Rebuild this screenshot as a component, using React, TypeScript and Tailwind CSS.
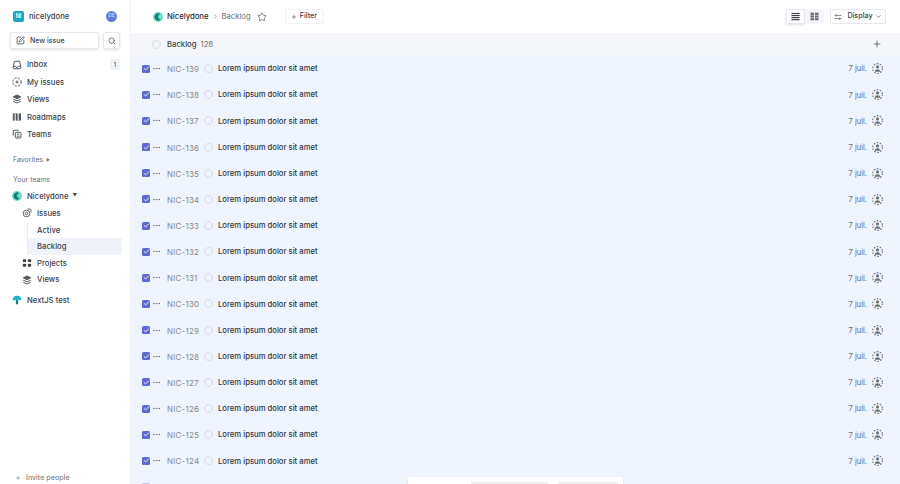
import type { ReactNode } from 'react';
import { Check, ChevronDown, ChevronRight, Ellipsis, Plus, Search, SquarePen, Star } from 'lucide-react';

const ISSUES = [139, 138, 137, 136, 135, 134, 133, 132, 131, 130, 129, 128, 127, 126, 125, 124];

const Logo = () => (
  <svg viewBox="0 0 12 12" className="w-[10px] h-[10px]">
    <circle cx="6" cy="6" r="6" fill="#74dccb" />
    <path d="M9 2.8A4.2 4.2 0 1 0 9.2 8.9 3.4 3.4 0 0 1 6 6.4 3.4 3.4 0 0 1 9 2.8Z" fill="#0f8073" />
  </svg>
);

const DashedCircle = ({ className }: { className: string }) => (
  <svg viewBox="0 0 14 14" className={className} fill="none">
    <circle cx="7" cy="7" r="6" stroke="#c6cad3" strokeWidth="1.2" strokeDasharray="2.6 0.5" />
  </svg>
);

const Assignee = () => (
  <svg viewBox="0 0 14 14" className="w-[11px] h-[11px]" fill="none">
    <circle cx="7" cy="7" r="6.2" stroke="#6b6f76" strokeWidth="1.4" strokeDasharray="2 1.9" />
    <circle cx="7" cy="5" r="2" fill="#6b6f76" />
    <path d="M3.4 11c.3-2.2 1.8-3.2 3.6-3.2s3.3 1 3.6 3.2Z" fill="#6b6f76" />
  </svg>
);

const InboxIcon = () => (
  <svg viewBox="0 0 12 12" className="w-[10px] h-[10px]" fill="none" stroke="#565a63" strokeWidth="1.2">
    <path d="M3 1.5h6l1.5 6v2.2a.8.8 0 0 1-.8.8H2.3a.8.8 0 0 1-.8-.8V7.5Z" />
    <path d="M1.5 7.5h2.6c.3 1 1 1.4 1.9 1.4s1.6-.4 1.9-1.4h2.6" />
  </svg>
);

const MyIssuesIcon = () => (
  <svg viewBox="0 0 12 12" className="w-[10px] h-[10px]" fill="none" stroke="#565a63" strokeWidth="1.2">
    <circle cx="6" cy="6" r="5" strokeDasharray="2.4 1.6" />
    <path d="M6 4.2v3.6M4.2 6h3.6" />
  </svg>
);

const ViewsIcon = () => (
  <svg viewBox="0 0 12 12" className="w-[10px] h-[10px]" fill="none" stroke="#565a63" strokeWidth="1.2">
    <path d="M6 1.2 10.5 3.4 6 5.6 1.5 3.4Z" fill="#565a63" />
    <path d="M1.5 6.2 6 8.2l4.5-2M1.5 8.8 6 10.8l4.5-2" />
  </svg>
);

const RoadmapsIcon = () => (
  <svg viewBox="0 0 12 12" className="w-[10px] h-[10px]" fill="#565a63">
    <path d="M1 2.2 3.2 1.2v8.6L1 10.8ZM4.4 1.2l2.4 1v8.6l-2.4-1ZM8 2.2l2.8-1v8.6L8 10.8Z" />
  </svg>
);

const TeamsIcon = () => (
  <svg viewBox="0 0 12 12" className="w-[10px] h-[10px]" fill="none" stroke="#565a63" strokeWidth="1.2">
    <path d="M8 1.5H2.3a.8.8 0 0 0-.8.8V8" />
    <rect x="4" y="4" width="6.8" height="6.8" rx="1" />
    <path d="M5.6 8.6h3.6M6.2 6.3h2.4" />
  </svg>
);

const IssuesIcon = () => (
  <svg viewBox="0 0 12 12" className="w-[10px] h-[10px]" fill="none" stroke="#565a63" strokeWidth="1.1">
    <circle cx="5.4" cy="6.6" r="4" />
    <circle cx="5.4" cy="6.6" r="1.6" />
    <path d="M6.5 1.2h3a1.3 1.3 0 0 1 1.3 1.3v3" />
  </svg>
);

const ProjectsIcon = () => (
  <svg viewBox="0 0 12 12" className="w-[10px] h-[10px]" fill="#3c4149">
    <rect x="1" y="1.5" width="4" height="3.4" rx="0.8" />
    <rect x="7" y="1.5" width="4" height="3.4" rx="0.8" />
    <rect x="1" y="7" width="4" height="3.4" rx="0.8" />
    <rect x="7" y="7" width="4" height="3.4" rx="0.8" />
  </svg>
);

const TreeIcon = () => (
  <svg viewBox="0 0 12 12" className="w-[10px] h-[10px]">
    <path d="M6 1C3 1 .8 2.8.6 5.4c1.6.9 3.4 1 5.4 1s3.8-.1 5.4-1C11.2 2.8 9 1 6 1Z" fill="#22b5c9" />
    <path d="M4.9 6h2.2l.3 5H4.6Z" fill="#17808f" />
  </svg>
);

const NavItem = ({ icon, label, badge }: { icon: ReactNode; label: string; badge?: string }) => (
  <div className="h-[17.4px] flex items-center pl-[12px] pr-[10px]">
    <span className="w-[10px] flex justify-center">{icon}</span>
    <span className="ml-[5px] pt-[1px] text-[7.7px] font-medium text-[#3c4149]">{label}</span>
    {badge && (
      <span className="ml-auto w-[10px] h-[11px] rounded-[2px] bg-[#edf2fa] text-[6px] text-[#3c4149] flex items-center justify-center">
        {badge}
      </span>
    )}
  </div>
);

const NavRow = ({ icon, label }: { icon: ReactNode; label: string }) => (
  <div className="h-[16.6px] pl-[22px] flex items-center">
    <span className="w-[10px] flex justify-center">{icon}</span>
    <span className="ml-[5px] pt-[1px] text-[7.7px] font-medium text-[#3c4149]">{label}</span>
  </div>
);

const IssueRow = ({ num }: { num: number }) => (
  <div className="h-[26.17px] shrink-0 flex items-center pl-[11px] pr-[17px]">
    <span className="w-[8px] h-[8px] rounded-[1.5px] bg-[#5e6ad2] flex items-center justify-center text-white">
      <Check size={7} strokeWidth={3} />
    </span>
    <Ellipsis size={9} className="ml-[2px] text-[#6b6f76]" />
    <span className="ml-[6px] w-[37px] pt-[1px] text-[8px] tracking-[0.2px] text-[#888888]">NIC-{num}</span>
    <DashedCircle className="w-[9px] h-[9px]" />
    <span className="ml-[5px] pt-[1px] text-[7.7px] font-medium text-[#33363d]">Lorem ipsum dolor sit amet</span>
    <span className="ml-auto pt-[1px] text-[7.5px] text-[#6b6f76]">7 juil.</span>
    <span className="ml-[5px]">
      <Assignee />
    </span>
  </div>
);

export default function App() {
  return (
    <div className="w-[900px] h-[484px] overflow-hidden flex bg-white font-['Inter',sans-serif]">
      <aside className="w-[131px] shrink-0 flex flex-col bg-white border-r border-[#eff1f4]">
        <div className="h-[32px] flex items-center px-[13px]">
          <span className="w-[11px] h-[11px] rounded-[2px] bg-[#1aa5c9] text-white text-[5.5px] font-semibold flex items-center justify-center">NI</span>
          <span className="ml-[5px] pt-[1px] text-[7.7px] font-medium text-[#3c4149]">nicelydone</span>
          <span className="ml-auto w-[11px] h-[11px] rounded-full bg-[#5f7fd6] text-[#dfe6fa] text-[5px] flex items-center justify-center">DE</span>
        </div>
        <div className="flex gap-[4px] px-[10px] h-[17px]">
          <div className="flex-1 flex items-center pl-[5px] rounded-[2px] border border-[#e6e8ee] shadow-sm">
            <SquarePen size={9} className="text-[#3c4149]" />
            <span className="ml-[5px] pt-[1px] text-[7px] font-medium text-[#3c4149]">New issue</span>
          </div>
          <div className="w-[17px] flex items-center justify-center rounded-[2px] border border-[#e6e8ee] shadow-sm">
            <Search size={8} className="text-[#3c4149]" />
          </div>
        </div>
        <div className="mt-[7px] flex flex-col">
          <NavItem icon={<InboxIcon />} label="Inbox" badge="1" />
          <NavItem icon={<MyIssuesIcon />} label="My issues" />
          <NavItem icon={<ViewsIcon />} label="Views" />
          <NavItem icon={<RoadmapsIcon />} label="Roadmaps" />
          <NavItem icon={<TeamsIcon />} label="Teams" />
        </div>
        <div className="mt-[12px] pl-[13px] flex items-center h-[11px] text-[7px] text-[#6b6f76]">
          Favorites <span className="ml-[3px] text-[4px]">▶</span>
        </div>
        <div className="mt-[9px] pl-[13px] h-[11px] flex items-center text-[7px] text-[#6b6f76]">Your teams</div>
        <div className="mt-[1px] h-[18px] pl-[12px] flex items-center">
          <Logo />
          <span className="ml-[5px] pt-[1px] text-[7.7px] font-medium text-[#3c4149]">Nicelydone</span>
          <span className="ml-[4px] text-[4.5px] text-[#3c4149]">▼</span>
        </div>
        <div className="flex flex-col">
          <NavRow icon={<IssuesIcon />} label="Issues" />
          <div className="ml-[27px] mr-[8px] border-l border-[#eaecf0] flex flex-col">
            <div className="h-[16.6px] pl-[9px] pt-[1px] flex items-center text-[7.7px] font-medium text-[#3c4149]">Active</div>
            <div className="h-[16.6px] pl-[9px] pt-[1px] flex items-center text-[7.7px] font-medium text-[#3c4149] bg-[#f0f3f9] rounded-[2px]">Backlog</div>
          </div>
          <NavRow icon={<ProjectsIcon />} label="Projects" />
          <NavRow icon={<ViewsIcon />} label="Views" />
        </div>
        <div className="mt-[4px] h-[17px] pl-[12px] flex items-center">
          <TreeIcon />
          <span className="ml-[5px] pt-[1px] text-[7.7px] font-medium text-[#3c4149]">NextJS test</span>
        </div>
        <div className="mt-auto pl-[15px] h-[12px] flex items-center text-[7.2px] text-[#6b6f76]">
          <Plus size={6} />
          <span className="ml-[5px]">Invite people</span>
        </div>
      </aside>
      <main className="flex-1 min-w-0 flex flex-col relative">
        <header className="h-[33px] shrink-0 flex items-center pl-[22px] pr-[14px]">
          <Logo />
          <span className="ml-[4px] pt-[1px] text-[7.7px] font-medium text-[#282a30]">Nicelydone</span>
          <ChevronRight size={7} className="ml-[3px] text-[#6b6f76]" />
          <span className="ml-[3px] pt-[1px] text-[7.7px] text-[#6b6f76]">Backlog</span>
          <Star size={10} className="ml-[6px] text-[#6b6f76]" />
          <div className="ml-[18px] h-[15px] pl-[5px] pr-[6px] flex items-center rounded-[2px] border border-[#eff1f4] text-[7.2px] font-medium text-[#3c4149]">
            <Plus size={6} className="mr-[3px]" />
            Filter
          </div>
          <div className="ml-auto flex items-center">
            <span className="w-[19px] h-[15px] rounded-[2px] border border-[#e6e8ee] shadow-sm flex items-center justify-center">
              <svg viewBox="0 0 10 10" className="w-[9px] h-[9px]" fill="#3c4149">
                <rect x="0.5" y="1" width="9" height="1.3" />
                <rect x="0.5" y="3.3" width="9" height="1.3" />
                <rect x="0.5" y="5.6" width="9" height="1.3" />
                <rect x="0.5" y="7.9" width="9" height="1.3" />
              </svg>
            </span>
            <span className="w-[19px] h-[15px] rounded-[2px] bg-[#f4f6fb] flex items-center justify-center">
              <svg viewBox="0 0 10 10" className="w-[9px] h-[9px]" fill="#6b6f76">
                <rect x="0.5" y="0.8" width="4" height="2.4" />
                <rect x="5.5" y="0.8" width="4" height="2.4" />
                <rect x="0.5" y="3.8" width="4" height="2.4" />
                <rect x="5.5" y="3.8" width="4" height="2.4" />
                <rect x="0.5" y="6.8" width="4" height="2.4" />
                <rect x="5.5" y="6.8" width="4" height="2.4" />
              </svg>
            </span>
            <div className="ml-[6px] w-[56px] h-[15px] flex items-center justify-center rounded-[2px] border border-[#e6e8ee] text-[7.2px] font-medium text-[#3c4149]">
              <svg viewBox="0 0 10 10" className="w-[8px] h-[8px] mr-[5px]" fill="none" stroke="#6b6f76" strokeWidth="1">
                <path d="M0.5 3h9M0.5 7h9M3 1.5v3M7 5.5v3" />
              </svg>
              Display
              <ChevronDown size={7} className="ml-[2px]" />
            </div>
          </div>
        </header>
        <div className="h-[22.5px] shrink-0 flex items-center bg-[#f4f6fa] pl-[21px] pr-[18px]">
          <DashedCircle className="w-[9px] h-[9px]" />
          <span className="ml-[6px] pt-[1px] text-[7.7px] font-medium text-[#3c4149]">Backlog</span>
          <span className="ml-[4px] pt-[1px] text-[7.7px] text-[#6b6f76]">128</span>
          <Plus size={10} className="ml-auto text-[#565a63]" />
        </div>
        <div className="flex-1 flex flex-col overflow-hidden bg-[#eff4ff]">
          {ISSUES.map((num) => (
            <IssueRow key={num} num={num} />
          ))}
          <div className="pl-[11px] pt-[9px]">
            <span className="block w-[8px] h-[8px] rounded-[1.5px] bg-[#c3c8dc]" />
          </div>
        </div>
        <div className="absolute left-[277px] bottom-0 w-[215px] h-[7px] bg-white rounded-t-[2px] shadow-sm flex pt-[5px] pl-[63px] gap-[10px]">
          <span className="w-[77px] h-[2px] bg-[#eeeeee]" />
          <span className="w-[60px] h-[2px] bg-[#eeeeee]" />
        </div>
      </main>
    </div>
  );
}
